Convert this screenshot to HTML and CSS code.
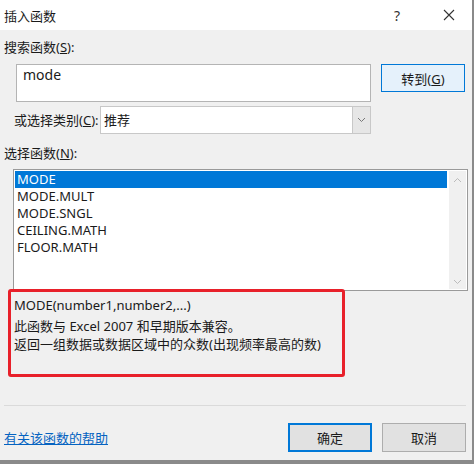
FILE: index.html
```html
<!DOCTYPE html>
<html lang="zh-CN">
<head>
    <meta charset="UTF-8">
    <title>插入函数</title>
    <link rel="stylesheet" href="styles.css">
</head>
<body>
    <div class="dialog">
        <div class="title-bar">
            <span class="title">插入函数</span>
            <span class="title-btn help">?</span>
            <span class="title-btn close">
                <svg width="12" height="12" viewBox="0 0 12 12"><path d="M1 1L11 11M11 1L1 11" stroke="#333" stroke-width="1.1" fill="none"/></svg>
            </span>
        </div>

        <div class="content">
            <div class="label">搜索函数(<u>S</u>):</div>
            <div class="search-row">
                <div class="search-box">mode</div>
                <button class="btn btn-go">转到(<u>G</u>)</button>
            </div>

            <div class="category-row">
                <span class="label">或选择类别(<u>C</u>):</span>
                <div class="select">
                    <span class="select-value">推荐</span>
                    <span class="select-arrow">
                        <svg width="9" height="6" viewBox="0 0 9 6"><path d="M1 1L4.5 4.5L8 1" stroke="#777" stroke-width="1" fill="none"/></svg>
                    </span>
                </div>
            </div>

            <div class="label list-label">选择函数(<u>N</u>):</div>
            <div class="listbox">
                <ul class="items">
                    <li class="selected">MODE</li>
                    <li>MODE.MULT</li>
                    <li>MODE.SNGL</li>
                    <li>CEILING.MATH</li>
                    <li>FLOOR.MATH</li>
                </ul>
                <div class="scrollbar">
                    <svg width="9" height="6" viewBox="0 0 9 6"><path d="M1 5L4.5 1.5L8 5" stroke="#bbb" stroke-width="1" fill="none"/></svg>
                    <svg width="9" height="6" viewBox="0 0 9 6"><path d="M1 1L4.5 4.5L8 1" stroke="#bbb" stroke-width="1" fill="none"/></svg>
                </div>
            </div>

            <div class="description">
                <div class="syntax">MODE(number1,number2,...)</div>
                <div class="desc-text">此函数与 Excel 2007 和早期版本兼容。<br>返回一组数据或数据区域中的众数(出现频率最高的数)</div>
            </div>

            <div class="separator"></div>

            <div class="footer">
                <a class="help-link" href="#">有关该函数的帮助</a>
                <div class="button-group">
                    <button class="btn btn-ok">确定</button>
                    <button class="btn">取消</button>
                </div>
            </div>
        </div>
    </div>
</body>
</html>
```

FILE: styles.css
```css
body {
    margin: 0;
    font-family: "Noto Sans", "Noto Sans CJK SC", sans-serif;
    font-size: 13px;
    color: #1a1a1a;
    background-color: #8a8a8a;
}
.dialog {
    width: 472px;
    height: 460px;
    background-color: #f0f0f0;
    display: flex;
    flex-direction: column;
}
.title-bar {
    height: 30px;
    background-color: #fff;
    display: flex;
    align-items: center;
    padding-left: 4px;
}
.title {
    flex-grow: 1;
    font-size: 13px;
}
.title-btn {
    width: 46px;
    display: flex;
    justify-content: center;
}
.help {
    font-size: 14px;
    color: #333;
    margin-right: 6px;
}
.content {
    padding: 8px 6px 0 4px;
    flex-grow: 1;
    display: flex;
    flex-direction: column;
}
.label {
    line-height: 18px;
}
.search-row {
    display: flex;
    gap: 10px;
    margin: 8px 0 0 12px;
    align-items: flex-start;
}
.search-box {
    width: 341px;
    height: 36px;
    background-color: #fff;
    border: 1px solid #b4b4b4;
    padding: 0 6px;
    line-height: 20px;
    font-size: 14px;
}
.btn {
    font-family: inherit;
    font-size: 13px;
    width: 84px;
    height: 29px;
    background-color: #e1e1e1;
    border: 1px solid #adadad;
    color: #1a1a1a;
    padding: 0;
}
.btn-go {
    height: 28px;
    background-color: #e5f1fb;
    border-color: #0078d7;
}
.category-row {
    display: flex;
    align-items: center;
    margin: 4px 0 0 10px;
}
.category-row .label {
    width: 86px;
}
.select {
    width: 269px;
    height: 26px;
    background-color: #fff;
    border: 1px solid #c8c8c8;
    display: flex;
}
.select-value {
    flex-grow: 1;
    line-height: 26px;
    padding-left: 3px;
}
.select-arrow {
    width: 17px;
    background-color: #e6e6e6;
    border-left: 1px solid #c8c8c8;
    display: flex;
    align-items: center;
    justify-content: center;
}
.list-label {
    margin-top: 10px;
}
.listbox {
    margin: 7px 0 0 9px;
    width: 451px;
    height: 118px;
    background-color: #fff;
    border: 1px solid #9a9a9a;
    display: flex;
    padding: 1px;
}
.items {
    list-style: none;
    margin: 0;
    padding: 0;
    flex-grow: 1;
}
.items li {
    height: 17px;
    line-height: 17px;
    padding-left: 2px;
    font-size: 13px;
}
.items li.selected {
    background-color: #0078d7;
    color: #fff;
}
.scrollbar {
    width: 17px;
    margin-left: 2px;
    background-color: #f0f0f0;
    display: flex;
    flex-direction: column;
    justify-content: space-between;
    align-items: center;
    padding: 6px 0 4px;
}
.description {
    margin: -2px 0 0 4px;
    width: 328px;
    height: 82px;
    border: 3px solid #e8202a;
    border-radius: 3px;
    padding-left: 3px;
}
.syntax {
    margin-top: 3px;
    line-height: 20px;
}
.desc-text {
    margin-top: 2px;
    line-height: 18px;
}
.separator {
    margin-top: 28px;
    border-top: 1px solid #dadada;
}
.footer {
    display: flex;
    align-items: center;
    justify-content: space-between;
    margin-top: 17px;
}
.help-link {
    color: #0563c1;
    text-decoration: underline;
}
.button-group {
    display: flex;
    gap: 10px;
}
.btn-ok {
    border: 2px solid #0078d7;
    background-color: #e1e1e1;
}
```
